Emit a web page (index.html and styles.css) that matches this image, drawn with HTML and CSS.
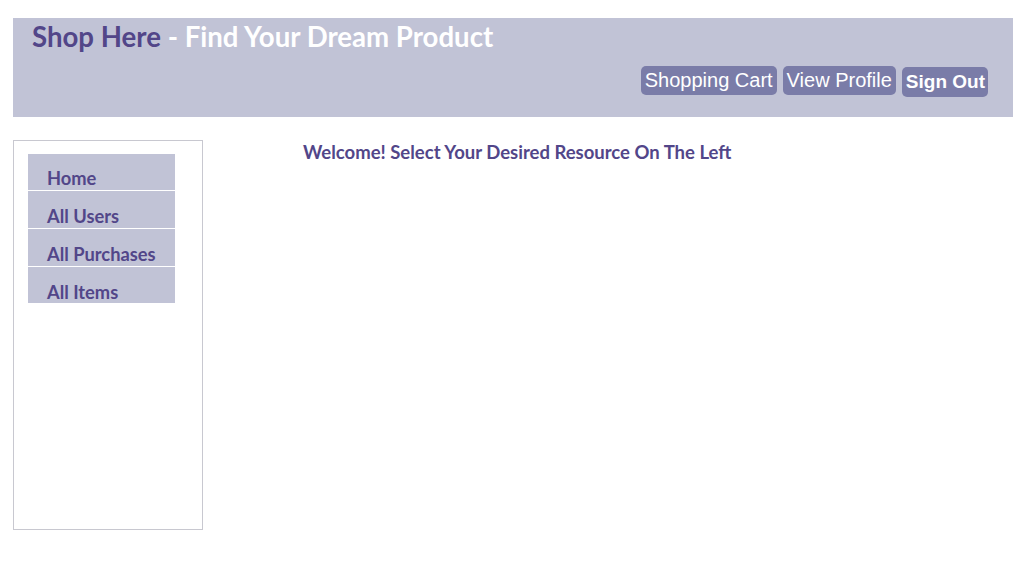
FILE: index.html
```html
<!DOCTYPE html>
<html>
<head>
<meta charset="utf-8">
<link rel="stylesheet" href="styles.css">
</head>
<body>
<div class="page">
  <header class="header">
    <h1 class="title"><span class="brand">Shop Here</span> - Find Your Dream Product</h1>
    <nav class="actions">
      <a class="btn" href="#">Shopping Cart</a>
      <a class="btn" href="#">View Profile</a>
      <a class="btn btn-strong" href="#">Sign Out</a>
    </nav>
  </header>
  <div class="body">
    <aside class="sidebar">
      <ul class="menu">
        <li class="menu-item"><a href="#">Home</a></li>
        <li class="menu-item"><a href="#">All Users</a></li>
        <li class="menu-item"><a href="#">All Purchases</a></li>
        <li class="menu-item"><a href="#">All Items</a></li>
      </ul>
    </aside>
    <main class="content">
      <p class="welcome">Welcome! Select Your Desired Resource On The Left</p>
    </main>
  </div>
</div>
</body>
</html>
```
FILE: styles.css
```css
html, body {
  margin: 0;
  padding: 0;
  background: #ffffff;
}
.page {
  padding: 18px 8px 0 13px;
  font-family: "Lato", "Open Sans", sans-serif;
}
.header {
  width: 1000px;
  height: 99px;
  box-sizing: border-box;
  background: #c1c3d6;
  padding: 0 25px 0 19px;
  display: flex;
  flex-direction: column;
}
.title {
  margin: 0;
  padding-top: 2px;
  font-size: 27.6px;
  line-height: 34px;
  font-weight: 700;
  color: #ffffff;
}
.brand {
  color: #524689;
}
.actions {
  display: flex;
  justify-content: flex-end;
  gap: 6px;
  margin-top: 12px;
}
.btn {
  font-family: "Liberation Sans", Arial, sans-serif;
  font-size: 20px;
  line-height: 29px;
  height: 29px;
  padding: 0 4px;
  background: #7a7ca8;
  color: #ffffff;
  text-decoration: none;
  border-radius: 5px;
}
.btn-strong {
  font-size: 19px;
  font-weight: 700;
  height: 30px;
  line-height: 30px;
  margin-top: 1px;
  padding: 0 3px 0 4px;
}
.body {
  display: flex;
  margin-top: 23px;
}
.sidebar {
  width: 190px;
  height: 390px;
  box-sizing: border-box;
  border: 1px solid #c8c8d0;
  padding: 13px 0 0 14px;
}
.menu {
  list-style: none;
  margin: 0;
  padding: 0;
  width: 147px;
}
.menu-item {
  height: 38px;
  background: #c1c3d6;
  border-top: 1px solid #ffffff;
  box-sizing: border-box;
}
.menu-item:first-child {
  border-top: none;
  height: 36px;
}
.menu-item:last-child {
  height: 37px;
}
.menu-item a {
  display: block;
  padding: 14px 0 0 19px;
  font-size: 18.3px;
  line-height: 22px;
  font-weight: 700;
  color: #524689;
  text-decoration: none;
}
.menu-item:first-child a {
  padding-top: 13px;
}
.content {
  padding-left: 100px;
}
.welcome {
  margin: 1px 0 0 0;
  font-size: 18.5px;
  line-height: 22px;
  font-weight: 700;
  color: #524689;
}
```
